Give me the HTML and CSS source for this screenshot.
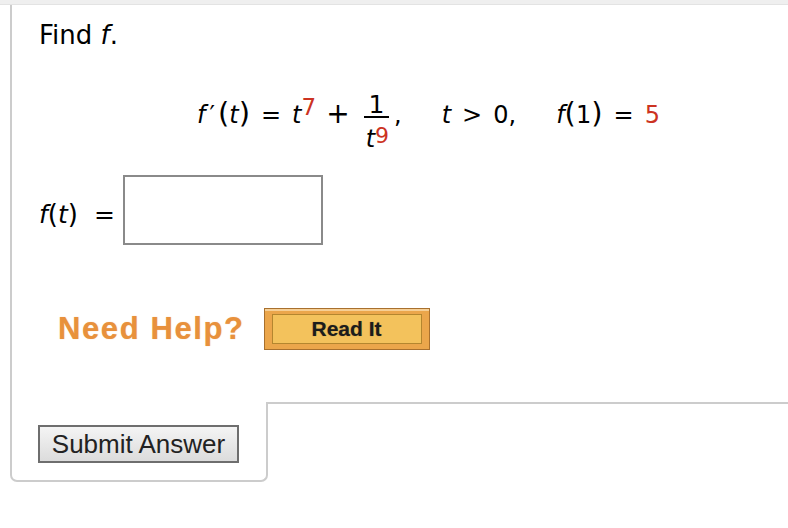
FILE: index.html
```html
<!DOCTYPE html>
<html>
<head>
<meta charset="utf-8">
<link rel="stylesheet" href="styles.css">
</head>
<body>
<div class="topbar"></div>
<div class="panel">
  <div class="upper">
    <div class="find">Find <i>f</i>.</div>
    <div class="math"><i>f</i><span class="prime">′</span><span class="paren">(</span><i>t</i><span class="paren">)</span><span class="op">=</span><i>t</i><sup class="red s7">7</sup><span class="op plus">+</span><span class="frac"><span class="num">1</span><span class="bar"></span><span class="den"><i>t</i><sup class="red s9">9</sup></span></span><span class="comma">,</span><span class="gap"></span><i>t</i><span class="op">&gt;</span>0,<span class="gap"></span><i>f</i><span class="paren">(</span>1<span class="paren">)</span><span class="op">=</span><span class="red">5</span></div>
    <div class="answer-row">
      <div class="label"><i>f</i><span class="paren2">(</span><i>t</i><span class="paren2">)</span> <span class="eq">=</span></div>
      <div class="input-box"></div>
    </div>
    <div class="help-row">
      <span class="need-help">Need Help?</span>
      <div class="read-it"><div class="read-inner">Read It</div></div>
    </div>
  </div>
  <div class="lower">
    <div class="submit-cell"><div class="submit-btn">Submit Answer</div></div>
    <div class="rest"></div>
  </div>
</div>
</body>
</html>
```
FILE: styles.css
```css
body {
  margin: 0;
  background: #fff;
  color: #000;
  font-family: "DejaVu Sans", Verdana, sans-serif;
}
.topbar {
  height: 4px;
  background: #efefef;
  border-bottom: 1px solid #e3e3e3;
}
.panel {
  margin-left: 10px;
}
.upper {
  border-left: 2px solid #cccccc;
  height: 397px;
  box-sizing: border-box;
  padding: 15px 0 0 27px;
}
.find {
  font-size: 26px;
  line-height: 30px;
}
.math {
  margin-top: 44px;
  padding-left: 158px;
  font-size: 24px;
  line-height: 30px;
  white-space: nowrap;
}
.paren {
  font-size: 29px;
}
.prime {
  margin-left: 4px;
  margin-right: 3px;
}
.op {
  margin: 0 11px;
}
.plus {
  font-size: 28px;
  margin: 0 10px;
}
sup {
  line-height: 0;
}
.red {
  color: #cc3322;
}
.s7 {
  font-size: 23px;
  vertical-align: 8px;
}
.s9 {
  font-size: 22px;
  vertical-align: 4px;
}
.frac {
  display: inline-block;
  vertical-align: -24px;
  text-align: center;
  padding: 0 4px;
}
.num {
  display: block;
  line-height: 22px;
  font-size: 25px;
}
.bar {
  display: block;
  height: 2px;
  background: #000;
}
.den {
  display: block;
  line-height: 22px;
  margin-top: 10px;
  padding-left: 2px;
}
.comma {
  margin-left: 1px;
}
.gap {
  display: inline-block;
  width: 40px;
}
.answer-row {
  margin-top: 25px;
  display: flex;
  align-items: center;
}
.label {
  font-size: 25px;
  line-height: 30px;
  padding-top: 8px;
  width: 84px;
  white-space: nowrap;
}
.paren2 {
  font-size: 26px;
}
.eq {
  margin-left: 8px;
}
.input-box {
  width: 200px;
  height: 70px;
  box-sizing: border-box;
  border: 2px solid #8a8a8a;
  background: #fff;
}
.help-row {
  margin-top: 63px;
  display: flex;
  align-items: center;
  padding-left: 19px;
}
.need-help {
  font-family: "Liberation Sans", Arial, sans-serif;
  font-weight: bold;
  font-size: 31px;
  letter-spacing: 1.6px;
  color: #e8913c;
  text-shadow: 0 0 1px rgba(232, 145, 60, 0.6);
  margin-right: 19px;
}
.read-it {
  width: 166px;
  height: 42px;
  box-sizing: border-box;
  border: 1px solid #a8702e;
  background: #eba64b;
  box-shadow: inset 0 2px 0 #f6cf95;
  padding: 5px 7px 5px 7px;
}
.read-inner {
  height: 100%;
  box-sizing: border-box;
  border: 1px solid #b4862f;
  background: #f3c25c;
  display: flex;
  align-items: center;
  justify-content: center;
  font-family: "Liberation Sans", Arial, sans-serif;
  font-weight: bold;
  font-size: 21px;
  color: #1c1c1c;
  text-shadow: 0 0 1px rgba(0, 0, 0, 0.4);
}
.lower {
  display: flex;
}
.submit-cell {
  width: 258px;
  height: 80px;
  box-sizing: border-box;
  border: 2px solid #cccccc;
  border-top: none;
  border-radius: 0 0 7px 7px;
  padding: 23px 0 0 26px;
}
.submit-btn {
  width: 201px;
  height: 38px;
  box-sizing: border-box;
  border: 2px solid #6e6e6e;
  background: linear-gradient(#f4f4f4, #dcdcdc);
  font-family: "Liberation Sans", Arial, sans-serif;
  font-size: 26px;
  line-height: 34px;
  color: #222;
  text-align: center;
}
.rest {
  flex: 1;
  border-top: 2px solid #cccccc;
}
```
